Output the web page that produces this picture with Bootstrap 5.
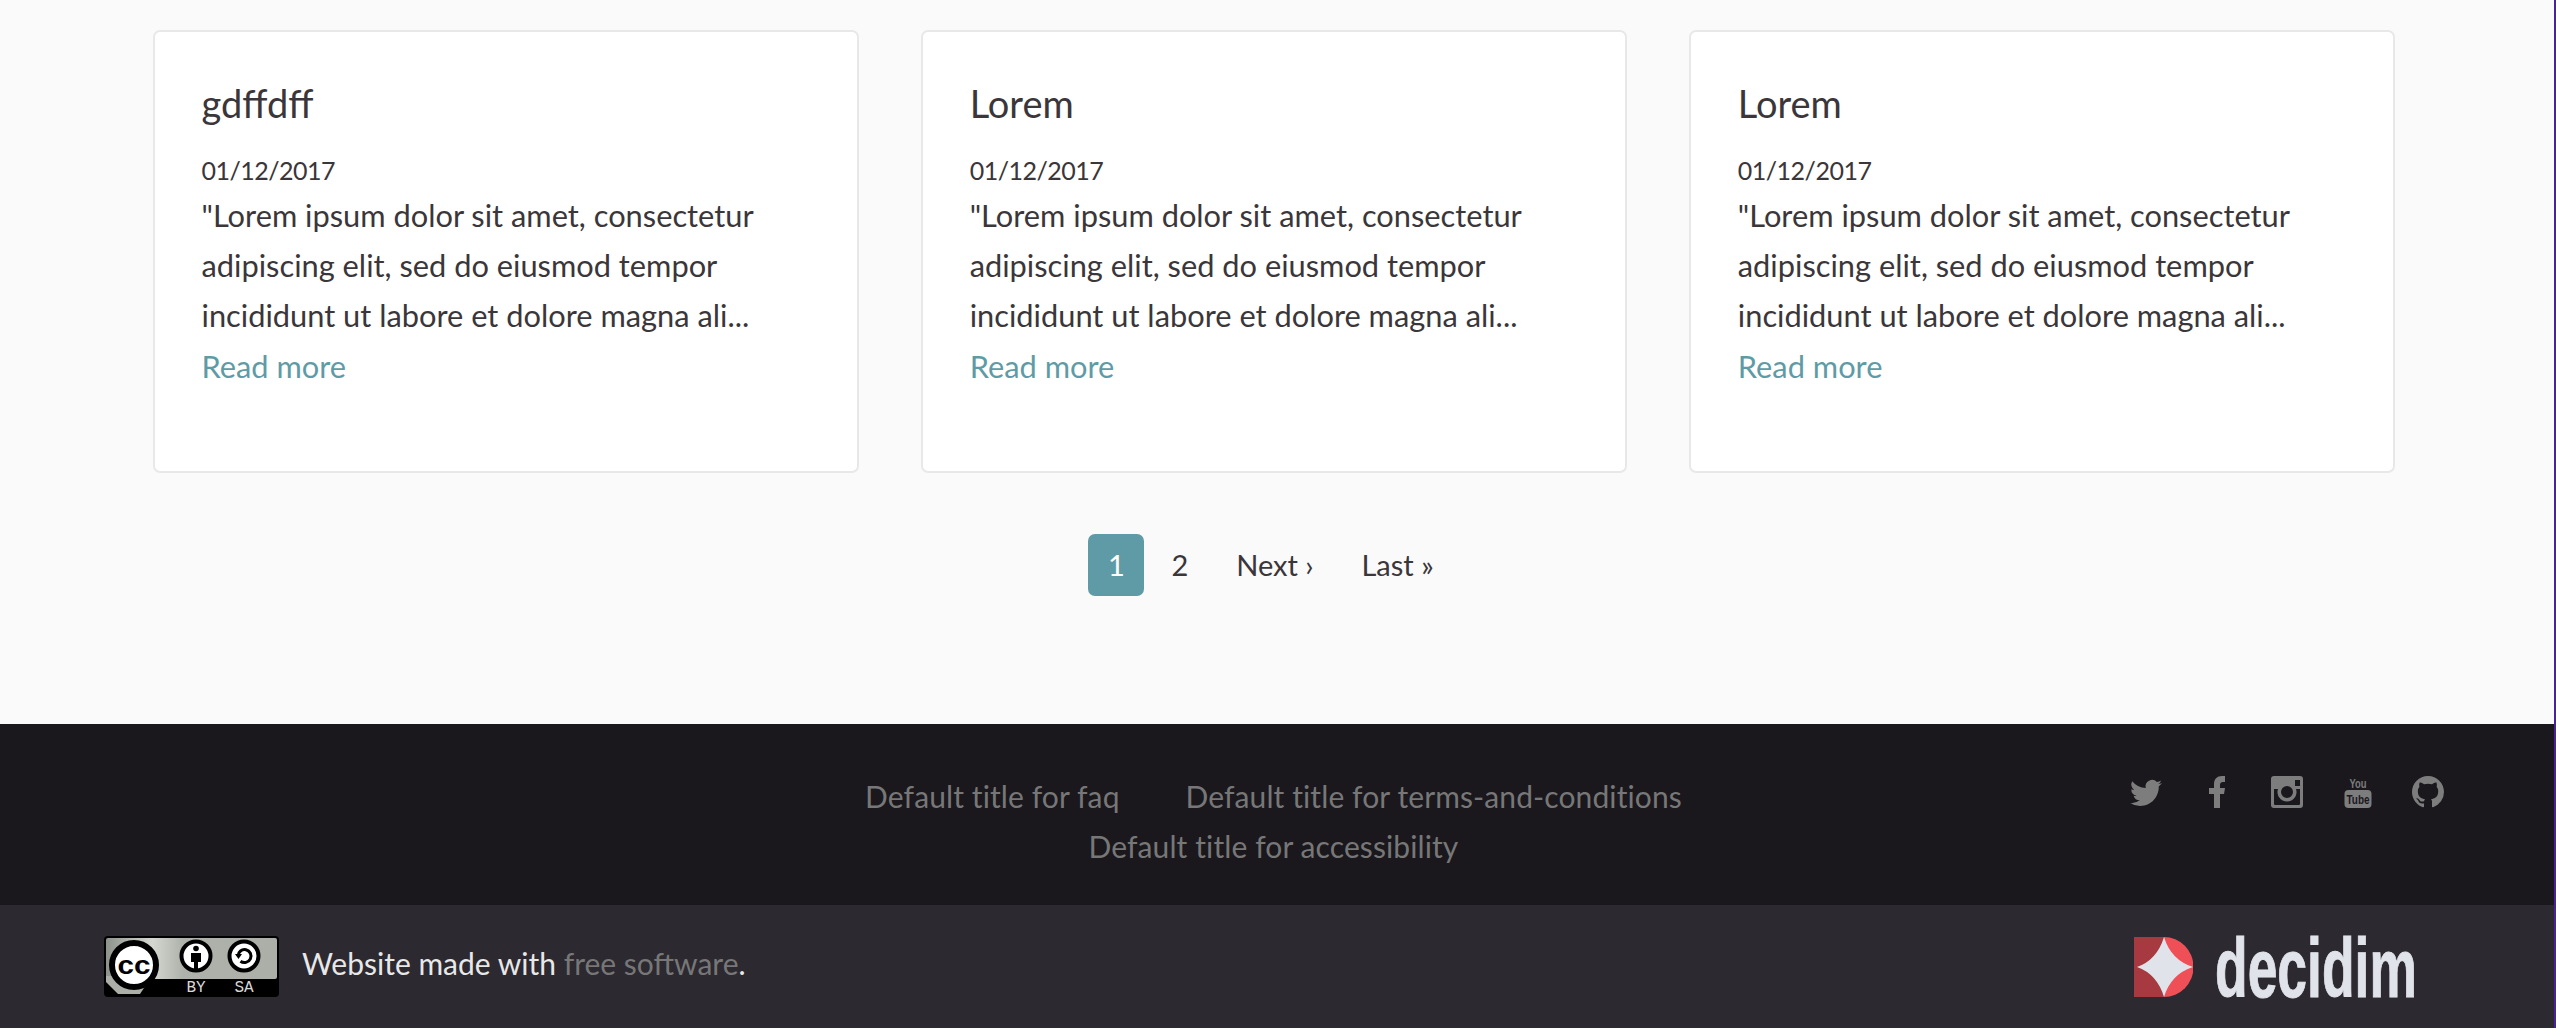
<!DOCTYPE html>
<html lang="en">
<head>
<meta charset="utf-8">
<title>News</title>
<link href="https://cdn.jsdelivr.net/npm/bootstrap@5.3.0/dist/css/bootstrap.min.css" rel="stylesheet">
<style>
html,body{height:100%}
body{background:#fafafa;color:#3a3639;font-family:"Lato","Noto Sans",sans-serif;font-size:30px;line-height:50px;overflow:hidden}
.page-shell{height:1028px;border-right:2px solid #4a1fa0;display:flex;flex-direction:column}
.content-area{height:724px;padding:30px 158.500px 0 152.500px}
.news-row{--bs-gutter-x:61.500px;--bs-gutter-y:0}
.news-card{height:443px;border:2px solid #e8e8e8;border-radius:7px;background:#fff;padding:46px 48px 48px 47px;font-size:30.800px;--bs-card-spacer-y:0;--bs-card-spacer-x:0}
.news-title{font-size:38px;line-height:50px;font-weight:400;margin:0 0 24px;color:#3a3639}
.news-date{font-size:25px;line-height:37px;margin:0 0 2px;letter-spacing:-.5px}
.news-text{margin:0 0 1px}
.read-link,.read-link:hover{color:#5f9ba6;text-decoration:none}
.pager{margin:61px 0 0;gap:2px;font-size:29px;padding-right:3px}
.pager-link{display:block;color:#3a3639;text-decoration:none;height:62px;line-height:62px;padding:0 23px;border-radius:7px}
.pager-on{background:#5f9ba6;color:#fff;width:56px;padding:0;text-align:center;margin-right:2px}
.foot-main{height:181px;background:#1a181d;display:grid;grid-template-columns:1fr 900px 1fr}
.foot-links{grid-column:2;padding:47px 7px 0 0;text-align:center;color:#777;letter-spacing:.1px}
.foot-links a{color:#777;text-decoration:none;margin:0 33px;display:inline-block}
.social-list{grid-column:3;justify-content:flex-end;align-items:flex-start;padding:52px 110px 0 0;gap:38.500px}
.social-list svg{display:block;fill:#7d7d7d;overflow:visible}
.foot-mini{height:123px;background:#2c2930;padding:0 140px 0 104px;color:#e8e8e8}
.mini-text{margin-bottom:8px;margin-left:-1px}
.mini-text a{color:#777;text-decoration:none}
.logo-mark{gap:22px}
.logo-word{font-family:"Liberation Sans",sans-serif;font-weight:700;color:#e0e4ea;-webkit-text-stroke:1px #e0e4ea;font-size:84px;line-height:60px;margin-top:3px;display:inline-block;width:199px;white-space:nowrap;transform:scaleX(.636);transform-origin:left center}
</style>
</head>
<body>
<div class="page-shell">
  <main class="content-area">
    <div class="row news-row">
      <div class="col-4">
        <div class="card news-card">
          <h2 class="news-title">gdffdff</h2>
          <p class="news-date">01/12/2017</p>
          <p class="news-text">"Lorem ipsum dolor sit amet, consectetur adipiscing elit, sed do eiusmod tempor incididunt ut labore et dolore magna ali...</p>
          <a class="read-link" href="#">Read more</a>
        </div>
      </div>
      <div class="col-4">
        <div class="card news-card">
          <h2 class="news-title">Lorem</h2>
          <p class="news-date">01/12/2017</p>
          <p class="news-text">"Lorem ipsum dolor sit amet, consectetur adipiscing elit, sed do eiusmod tempor incididunt ut labore et dolore magna ali...</p>
          <a class="read-link" href="#">Read more</a>
        </div>
      </div>
      <div class="col-4">
        <div class="card news-card">
          <h2 class="news-title">Lorem</h2>
          <p class="news-date">01/12/2017</p>
          <p class="news-text">"Lorem ipsum dolor sit amet, consectetur adipiscing elit, sed do eiusmod tempor incididunt ut labore et dolore magna ali...</p>
          <a class="read-link" href="#">Read more</a>
        </div>
      </div>
    </div>
    <nav class="d-flex justify-content-center pager">
      <a class="pager-link pager-on" href="#">1</a>
      <a class="pager-link" href="#">2</a>
      <a class="pager-link" href="#">Next ›</a>
      <a class="pager-link" href="#">Last »</a>
    </nav>
  </main>
  <footer>
    <div class="foot-main">
      <div class="foot-links">
        <a href="#">Default title for faq</a><a href="#">Default title for terms-and-conditions</a><br>
        <a href="#">Default title for accessibility</a>
      </div>
      <div class="d-flex social-list">
        <svg width="32" height="32" viewBox="0 0 16 16"><path d="M5.026 15c6.038 0 9.341-5.003 9.341-9.334 0-.14 0-.282-.006-.422A6.685 6.685 0 0 0 16 3.542a6.658 6.658 0 0 1-1.889.518 3.301 3.301 0 0 0 1.447-1.817 6.533 6.533 0 0 1-2.087.793A3.286 3.286 0 0 0 7.875 6.030a9.325 9.325 0 0 1-6.767-3.429 3.289 3.289 0 0 0 1.018 4.382A3.323 3.323 0 0 1 .64 6.575v.045a3.288 3.288 0 0 0 2.632 3.218 3.203 3.203 0 0 1-.865.115 3.230 3.230 0 0 1-.614-.057 3.283 3.283 0 0 0 3.067 2.277A6.588 6.588 0 0 1 .78 13.580a6.320 6.320 0 0 1-.78-.045A9.344 9.344 0 0 0 5.026 15z"/></svg>
        <svg width="32" height="32" viewBox="0 0 32 32"><path d="M13 32V18H8v-6h5V8c0-5 3-8 8-8h3v6h-2c-2 0-3 1-3 3v3h5l-1 6h-4v14z"/></svg>
        <svg width="32" height="32" viewBox="0 0 32 32"><path fill-rule="evenodd" d="M3 0h26a3 3 0 0 1 3 3v26a3 3 0 0 1-3 3H3a3 3 0 0 1-3-3V3a3 3 0 0 1 3-3zm21 4v6h5V4zM3 13v15a1 1 0 0 0 1 1h24a1 1 0 0 0 1-1V13h-4a9.500 9.500 0 1 1-18 0zm13-3a6 6 0 1 0 0 12 6 6 0 0 0 0-12z"/></svg>
        <svg width="32" height="32" viewBox="0 0 32 32"><text x="16" y="11.500" text-anchor="middle" font-family="Liberation Sans,sans-serif" font-weight="700" font-size="13" fill="#7d7d7d" textLength="17" lengthAdjust="spacingAndGlyphs">You</text><rect x="2.500" y="14" width="27" height="18" rx="4"/><text x="16" y="27.500" text-anchor="middle" font-family="Liberation Sans,sans-serif" font-weight="700" font-size="12" fill="#1a181d" textLength="23" lengthAdjust="spacingAndGlyphs">Tube</text></svg>
        <svg width="32" height="32" viewBox="0 0 16 16"><path d="M8 0C3.580 0 0 3.580 0 8c0 3.540 2.290 6.530 5.470 7.590.4.070.55-.17.55-.38 0-.19-.01-.82-.01-1.490-2.010.37-2.530-.49-2.690-.94-.09-.23-.48-.94-.82-1.130-.28-.15-.68-.52-.01-.53.63-.01 1.080.58 1.230.82.72 1.210 1.870.87 2.330.66.07-.52.28-.87.51-1.070-1.780-.2-3.640-.89-3.640-3.950 0-.87.31-1.590.82-2.150-.08-.2-.36-1.020.08-2.120 0 0 .67-.21 2.200.82.64-.18 1.320-.27 2-.27.68 0 1.360.09 2 .27 1.530-1.040 2.200-.82 2.200-.82.44 1.100.16 1.920.08 2.120.51.56.82 1.270.82 2.150 0 3.070-1.870 3.750-3.650 3.950.29.25.54.73.54 1.480 0 1.070-.01 1.930-.01 2.200 0 .21.15.46.55.38A8.013 8.013 0 0 0 16 8c0-4.420-3.580-8-8-8z"/></svg>
      </div>
    </div>
    <div class="foot-mini d-flex align-items-center justify-content-between">
      <div class="d-flex align-items-center gap-4">
        <svg width="175" height="61" viewBox="0 0 175 61">
          <defs><linearGradient id="ccg" x1="0" x2="1" y1="0" y2="0"><stop offset="0" stop-color="#8d938a"/><stop offset=".27" stop-color="#d4d8d0"/><stop offset=".45" stop-color="#aeb2aa"/><stop offset="1" stop-color="#abafa7"/></linearGradient></defs>
          <rect width="175" height="61" rx="4" fill="#000"/>
          <rect x="2" y="2" width="171" height="41" rx="2" fill="url(#ccg)"/>
          <path d="M2 40h46l-12 18H14L2 46z" fill="#abafa7"/>
          <circle cx="30" cy="29" r="22" fill="#fff" stroke="#000" stroke-width="6"/>
          <text x="30" y="38" text-anchor="middle" font-family="Liberation Sans,sans-serif" font-weight="700" font-size="26" fill="#000" textLength="33" lengthAdjust="spacingAndGlyphs">cc</text>
          <circle cx="92" cy="20" r="14.500" fill="#fff" stroke="#000" stroke-width="4"/>
          <circle cx="92" cy="12.500" r="2.800" fill="#000"/>
          <path d="M87 17h10v9h-3v8h-4v-8h-3z" fill="#000"/>
          <circle cx="140" cy="20" r="14.500" fill="#fff" stroke="#000" stroke-width="4"/>
          <path d="M134 20a6.500 6.500 0 1 1 2.500 5.200" fill="none" stroke="#000" stroke-width="3"/>
          <path d="M131 18h7l-3.500 5z" fill="#000"/>
          <text x="92" y="56" text-anchor="middle" font-family="Liberation Mono,monospace" font-size="16" fill="#d8d8d8">BY</text>
          <text x="140" y="56" text-anchor="middle" font-family="Liberation Mono,monospace" font-size="16" fill="#d8d8d8">SA</text>
        </svg>
        <span class="mini-text">Website made with <a href="#">free software</a>.</span>
      </div>
      <div class="d-flex align-items-center logo-mark">
        <svg width="59" height="60" viewBox="0 0 59 60">
          <rect width="30" height="60" fill="#a63a40"/>
          <path d="M30 0a29.500 30 0 0 1 0 60z" fill="#ef5058"/>
          <path d="M30 0Q37 23 59 30 37 37 30 60 23 37 3 30 23 23 30 0z" fill="#e0e4ea"/>
        </svg>
        <span class="logo-word">decidim</span>
      </div>
    </div>
  </footer>
</div>
<script src="https://cdn.jsdelivr.net/npm/bootstrap@5.3.0/dist/js/bootstrap.bundle.min.js"></script>
</body>
</html>
